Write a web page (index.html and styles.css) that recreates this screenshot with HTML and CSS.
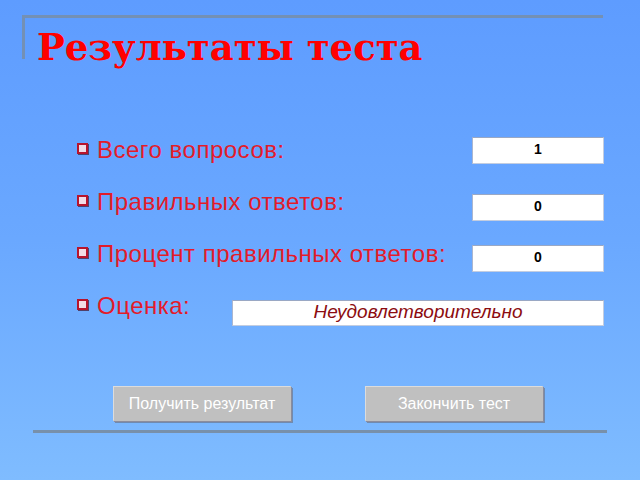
FILE: index.html
```html
<!DOCTYPE html>
<html lang="ru">
<head>
<meta charset="utf-8">
<title>Результаты теста</title>
<link rel="stylesheet" href="styles.css">
</head>
<body>
<div class="slide">
  <div class="frame">
    <h1 class="title">Результаты теста</h1>
  </div>
  <ul class="list">
    <li class="row">
      <span class="label"><span class="bullet"></span>Всего вопросов:</span>
      <span class="box box-num b1">1</span>
    </li>
    <li class="row">
      <span class="label"><span class="bullet"></span>Правильных ответов:</span>
      <span class="box box-num b2">0</span>
    </li>
    <li class="row">
      <span class="label"><span class="bullet"></span>Процент правильных ответов:</span>
      <span class="box box-num b3">0</span>
    </li>
    <li class="row">
      <span class="label"><span class="bullet"></span>Оценка:</span>
      <span class="box box-grade b4">Неудовлетворительно</span>
    </li>
  </ul>
  <div class="buttons">
    <button class="btn">Получить результат</button>
    <button class="btn">Закончить тест</button>
  </div>
  <div class="rule"></div>
</div>
</body>
</html>
```
FILE: styles.css
```css
html, body {
  margin: 0;
  padding: 0;
}
body {
  width: 640px;
  height: 480px;
  overflow: hidden;
  background: linear-gradient(to bottom, #5e9cff 0%, #6aa8ff 50%, #7fbcff 100%);
  font-family: "Liberation Sans", Arial, sans-serif;
}
.slide {
  width: 640px;
  height: 480px;
  padding-top: 15px;
  box-sizing: border-box;
}
.frame {
  margin-left: 22px;
  width: 578px;
  height: 41px;
  border-top: 3px solid #7490b4;
  border-left: 3px solid #7490b4;
}
.title {
  margin: 0;
  padding: 7px 0 0 12px;
  font-family: "DejaVu Serif", "Liberation Serif", serif;
  font-weight: bold;
  font-size: 37px;
  line-height: 44px;
  color: #ff0000;
  white-space: nowrap;
}
.list {
  list-style: none;
  margin: 78px 0 0 77px;
  padding: 0;
  width: 527px;
}
.row {
  display: flex;
  justify-content: space-between;
  align-items: flex-start;
  height: 52px;
}
.label {
  display: flex;
  align-items: center;
  font-size: 24px;
  line-height: 26px;
  letter-spacing: 0.5px;
  color: #e31b2a;
  white-space: nowrap;
}
.bullet {
  display: inline-block;
  width: 7px;
  height: 7px;
  border: 2px solid #b8142c;
  background: #f2dce6;
  box-shadow: 1px 1px 0 #50406a;
  margin-right: 9px;
  margin-top: -4px;
}
.box {
  display: block;
  background: #ffffff;
  border: 1px solid #c3cde0;
  border-top-color: #9aa8c4;
  border-left-color: #aab6d0;
  box-sizing: border-box;
  text-align: center;
}
.box-num {
  width: 132px;
  height: 27px;
  font-weight: bold;
  font-size: 14px;
  line-height: 22px;
  color: #000;
}
.b1 { margin-top: 0; }
.b2 { margin-top: 5px; }
.b3 { margin-top: 4px; }
.b4 { margin-top: 7px; }
.box-grade {
  width: 372px;
  height: 26px;
  font-style: italic;
  font-size: 19px;
  line-height: 22px;
  color: #8c0c10;
}
.buttons {
  display: flex;
  gap: 74px;
  margin: 41px 0 0 113px;
}
.btn {
  width: 178px;
  height: 35px;
  padding: 0;
  background: #c0c0c0;
  color: #ffffff;
  font-family: "Liberation Sans", Arial, sans-serif;
  font-size: 16px;
  border: 1px solid #c0c0c0;
  border-top-color: #dcdcdc;
  border-left-color: #dcdcdc;
  box-shadow: 1px 1px 0 #8c8c9c, 2px 2px 0 #6f8ab0;
}
.rule {
  margin: 9px 0 0 33px;
  width: 574px;
  height: 3px;
  background: #7890aa;
}
```
